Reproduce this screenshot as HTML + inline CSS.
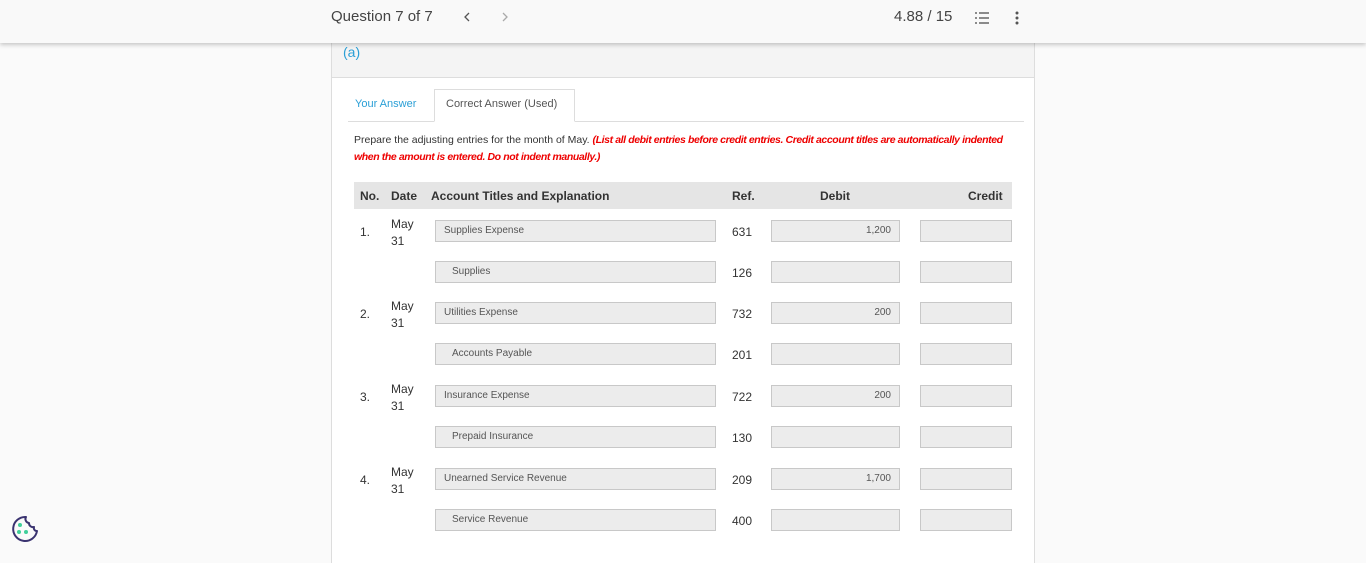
<!DOCTYPE html><html><head><style>
body{margin:0;width:1366px;height:549px;overflow:hidden;background:#fafafa;font-family:"Liberation Sans",sans-serif;position:relative;color:#333}
.a{position:absolute}
.hdr{left:0;top:0;width:1366px;height:43px;background:#f9f9f9;box-shadow:0 2px 4px rgba(0,0,0,.2);z-index:2}
.panel{left:331px;top:43px;width:702px;height:520px;background:#fff;border-left:1px solid #ddd;border-right:1px solid #ddd}
.gray{left:332px;top:43px;width:702px;height:34px;background:#f4f4f4;border-bottom:1px solid #ddd}
.in{position:absolute;height:22px;background:#ececec;border:1px solid #c8c8c8;font-size:10px;color:#555;line-height:20px;box-sizing:border-box}
.t{position:absolute;font-size:12px;color:#333}
</style></head><body>
<div class="a hdr">
<div class="t" style="left:331px;top:8px;font-size:15px;color:#444">Question 7 of 7</div>
<svg class="a" style="left:463px;top:11px" width="8" height="12"><path d="M6 2 L2 6 L6 10" fill="none" stroke="#555" stroke-width="1.3"/></svg>
<svg class="a" style="left:501px;top:11px" width="8" height="12"><path d="M2 2 L6 6 L2 10" fill="none" stroke="#aaa" stroke-width="1.3"/></svg>
<div class="t" style="left:894px;top:8px;font-size:15px;color:#444">4.88 / 15</div>
<svg class="a" style="left:974px;top:10px" width="16" height="16"><g stroke="#666" stroke-width="1.5"><line x1="5" y1="3" x2="15" y2="3"/><line x1="5" y1="8" x2="15" y2="8"/><line x1="5" y1="13" x2="15" y2="13"/><line x1="1" y1="3" x2="3" y2="3"/><line x1="1" y1="8" x2="3" y2="8"/><line x1="1" y1="13" x2="3" y2="13"/></g></svg>
<svg class="a" style="left:1014px;top:10px" width="6" height="16"><circle cx="3" cy="3" r="1.5" fill="#555"/><circle cx="3" cy="8" r="1.5" fill="#555"/><circle cx="3" cy="13" r="1.5" fill="#555"/></svg>
</div>
<div class="a panel"></div>
<div class="a gray"></div>
<div class="t" style="left:343px;top:44px;font-size:14px;color:#2a9fd6">(a)</div>
<div class="a" style="left:348px;top:121px;width:676px;border-top:1px solid #ddd"></div>
<div class="a" style="left:434px;top:89px;width:141px;height:33px;border:1px solid #ddd;border-bottom:1px solid #fff;background:#fff;box-sizing:border-box"></div>
<div class="t" style="left:355px;top:98px;font-size:11px;color:#2a9fd6">Your Answer</div>
<div class="t" style="left:446px;top:98px;font-size:11px;color:#555">Correct Answer (Used)</div>
<div class="t" style="left:354px;top:132px;font-size:10.5px;line-height:17px;width:650px">Prepare the adjusting entries for the month of May. <i style="color:#e00;font-weight:bold;letter-spacing:-0.4px">(List all debit entries before credit entries. Credit account titles are automatically indented when the amount is entered. Do not indent manually.)</i></div>
<div class="a" style="left:354px;top:182px;width:658px;height:27px;background:#e5e5e5"></div>
<div class="t" style="left:360px;top:189px;font-weight:bold">No.</div>
<div class="t" style="left:391px;top:189px;font-weight:bold">Date</div>
<div class="t" style="left:431px;top:189px;font-weight:bold">Account Titles and Explanation</div>
<div class="t" style="left:732px;top:189px;font-weight:bold">Ref.</div>
<div class="t" style="left:820px;top:189px;font-weight:bold">Debit</div>
<div class="t" style="left:968px;top:189px;font-weight:bold">Credit</div>
<script>
var rows=[["1.","Supplies Expense","631","1,200","Supplies","126"],["2.","Utilities Expense","732","200","Accounts Payable","201"],["3.","Insurance Expense","722","200","Prepaid Insurance","130"],["4.","Unearned Service Revenue","209","1,700","Service Revenue","400"]];
var ys=[231,313,396,479],h="";
rows.forEach(function(r,i){var y=ys[i],y2=y+41;
h+='<div class="t" style="left:360px;top:'+(y-6)+'px">'+r[0]+'</div><div class="t" style="left:391px;top:'+(y-15)+'px;line-height:17px">May<br>31</div>';
h+='<div class="in" style="left:435px;top:'+(y-11)+'px;width:281px;padding-left:8px">'+r[1]+'</div><div class="t" style="left:732px;top:'+(y-6)+'px">'+r[2]+'</div>';
h+='<div class="in" style="left:771px;top:'+(y-11)+'px;width:129px;text-align:right;padding-right:8px">'+r[3]+'</div><div class="in" style="left:920px;top:'+(y-11)+'px;width:92px"></div>';
h+='<div class="in" style="left:435px;top:'+(y2-11)+'px;width:281px;padding-left:16px">'+r[4]+'</div><div class="t" style="left:732px;top:'+(y2-6)+'px">'+r[5]+'</div>';
h+='<div class="in" style="left:771px;top:'+(y2-11)+'px;width:129px"></div><div class="in" style="left:920px;top:'+(y2-11)+'px;width:92px"></div>';});
document.write(h);
</script>
<svg class="a" style="left:8px;top:513px" width="32" height="32"><path d="M18 4 A12 12 0 1 0 29 18 A3 3 0 0 1 26 14 A4 4 0 0 1 21 10 A4 4 0 0 1 18 4Z" fill="none" stroke="#3a3370" stroke-width="2" stroke-linejoin="round"/><circle cx="12" cy="12" r="2" fill="#3fcf9a"/><circle cx="11" cy="19" r="2" fill="#3fcf9a"/><circle cx="18" cy="19" r="2" fill="#3fcf9a"/></svg>
</body></html>
